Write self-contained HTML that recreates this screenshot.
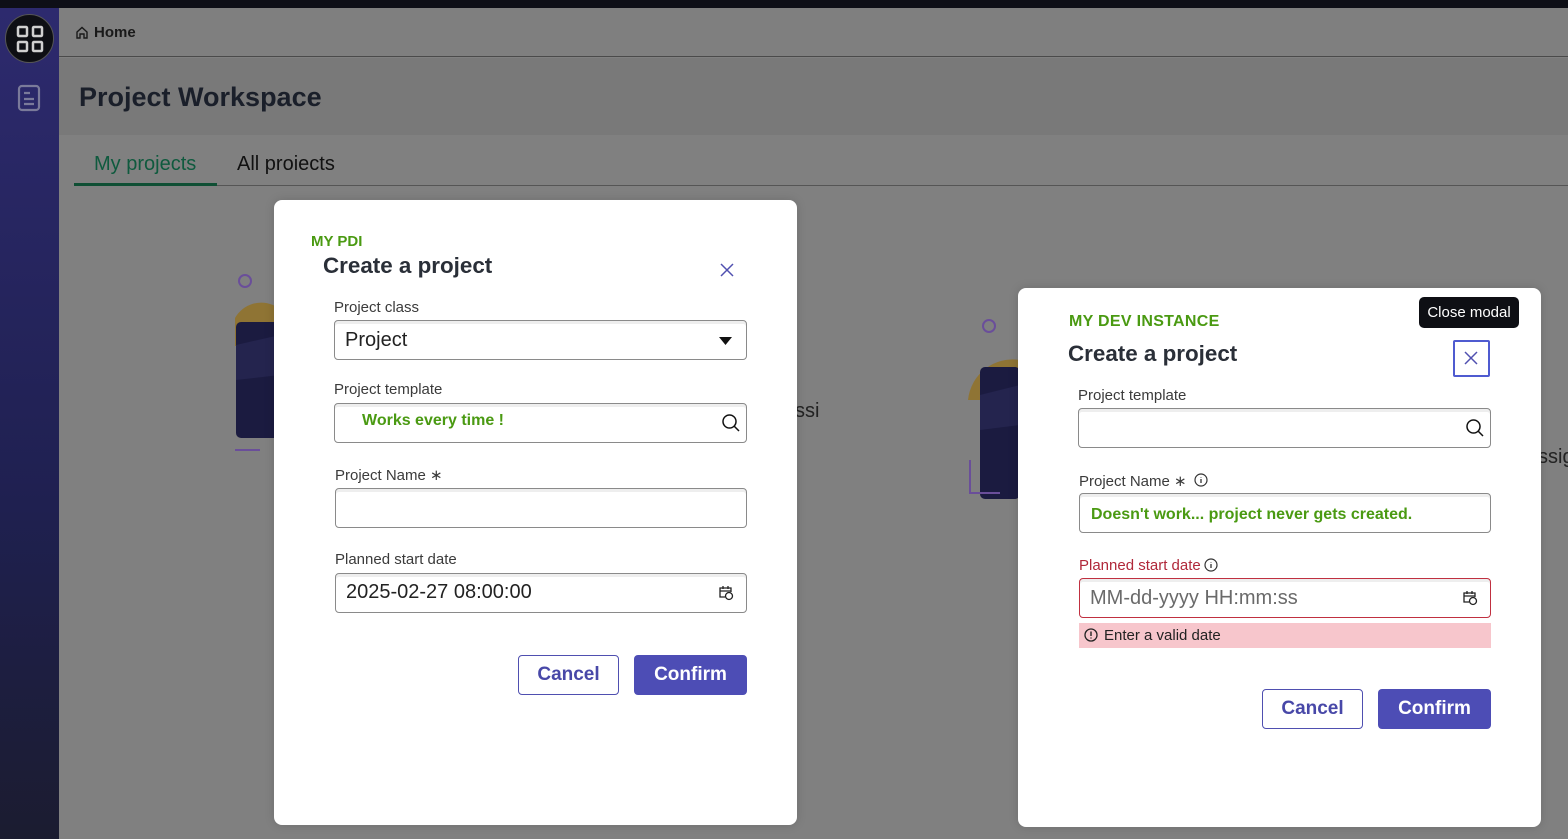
<!DOCTYPE html>
<html><head><meta charset="utf-8"><style>
*{box-sizing:border-box;margin:0;padding:0}
body{width:1568px;height:839px;overflow:hidden;background:#808080;font-family:"Liberation Sans",sans-serif;position:relative}
.abs{position:absolute}
.topbar{left:0;top:0;width:1568px;height:8px;background:#0e0f17}
.side{left:0;top:8px;width:59px;height:831px;background:linear-gradient(#2d2a6e,#1f2050 60%,#1b1c30)}
.logo{left:5px;top:14px;width:49px;height:49px;border-radius:50%;background:#0e0f14;border:1px solid #555}
.hdr{left:59px;top:8px;width:1509px;height:49px;background:#7f7f7f;border-bottom:1px solid #4a4a4a}
.band{left:59px;top:58px;width:1509px;height:77px;background:#797979}
.modal{background:#fff;border-radius:8px;box-shadow:0 0 10px rgba(0,0,0,.15)}
.lbl{font-size:15px;color:#3b3b3b}
.inp{border:1px solid #8a8a8a;border-radius:4px;background:#fff;box-shadow:inset 0 3px 0 #eee}
.btnc{border:1px solid #4f4fb0;border-radius:4px;color:#4848a8;font-size:19px;font-weight:bold;text-align:center;background:#fff}
.btnf{background:#4d4db5;border-radius:4px;color:#fff;font-size:19px;font-weight:bold;text-align:center}
.green{color:#4a9a12;font-weight:bold}
.ttl{font-size:22.4px;font-weight:bold;color:#2a2f38}
</style></head><body>
<div class="abs topbar"></div>
<div class="abs side"></div>
<div class="abs logo"><svg width="49" height="49" viewBox="0 0 49 49"><g fill="none" stroke="#d0d0d0" stroke-width="2.5"><rect x="12" y="12" width="9" height="9" rx="1"/><rect x="27" y="12" width="9" height="9" rx="1"/><rect x="12" y="27" width="9" height="9" rx="1"/><rect x="27" y="27" width="9" height="9" rx="1"/></g></svg></div>
<svg class="abs" style="left:17px;top:84px" width="24" height="28" viewBox="0 0 24 28"><rect x="2" y="2" width="20" height="24" rx="3" fill="none" stroke="#7a7a9a" stroke-width="2.2"/><path d="M7 9h6M7 15h10M7 20h10" stroke="#7a7a9a" stroke-width="2.2"/></svg>
<div class="abs hdr"></div>
<svg class="abs" style="left:75px;top:26px" width="14" height="13" viewBox="0 0 14 13"><path d="M2 6L7 1.5 12 6V12H9V8H5v4H2z" fill="none" stroke="#1a1a1a" stroke-width="1.4"/></svg>
<div class="abs" style="left:94px;top:24px;font-size:15px;font-weight:bold;color:#1a1a1a">Home</div>
<div class="abs band"></div>
<div class="abs" style="left:79px;top:82px;font-size:27px;font-weight:bold;color:#1a1f2a">Project Workspace</div>
<div class="abs" style="left:94px;top:153px;font-size:20px;color:#0f5a3e">My projects</div>
<div class="abs" style="left:237px;top:153px;font-size:20px;color:#111">All proiects</div>
<div class="abs" style="left:74px;top:183px;width:143px;height:3px;background:#0f4f34"></div>
<div class="abs" style="left:217px;top:185px;width:1351px;height:1px;background:#555"></div>
<svg class="abs" style="left:230px;top:270px" width="50" height="185" viewBox="0 0 50 185"><circle cx="15" cy="11" r="6" fill="none" stroke="#6a4e9a" stroke-width="2"/><path d="M5 48a30 30 0 0 1 40-12v40H5z" fill="#8f7434"/><rect x="6" y="52" width="44" height="116" rx="5" fill="#1b1b40"/><path d="M6 75l44-10v40L6 110z" fill="#24244e"/><path d="M5 180h25" stroke="#6a4e9a" stroke-width="2"/></svg>
<svg class="abs" style="left:945px;top:315px" width="75" height="185" viewBox="0 0 75 185"><circle cx="44" cy="11" r="6" fill="none" stroke="#6a4e9a" stroke-width="2"/><path d="M23 85a45 45 0 0 1 52-40v40z" fill="#8f7434"/><rect x="35" y="52" width="40" height="132" rx="5" fill="#1b1b40"/><path d="M35 80l40-10v40L35 115z" fill="#24244e"/><path d="M25 145v33h30" fill="none" stroke="#6a4e9a" stroke-width="2"/></svg>
<div class="abs" style="left:795px;top:400px;font-size:20px;color:#222">ssi</div>
<div class="abs" style="left:1538px;top:446px;font-size:20px;color:#222">ssig</div>
<div class="abs modal" style="left:274px;top:200px;width:523px;height:625px"></div>
<div class="abs green" style="left:311px;top:233px;font-size:15px">MY PDI</div>
<div class="abs ttl" style="left:323px;top:253px">Create a project</div>
<svg class="abs" style="left:720px;top:263px" width="14" height="14"><path d="M1 1L13 13M13 1L1 13" stroke="#5050b0" stroke-width="1.5"/></svg>
<div class="abs lbl" style="left:334px;top:299px">Project class</div>
<div class="abs inp" style="left:334px;top:320px;width:413px;height:40px"></div>
<div class="abs" style="left:345px;top:329px;font-size:20px;color:#222">Project</div>
<svg class="abs" style="left:719px;top:337px" width="13" height="8"><path d="M0 0h13L6.5 8z" fill="#111"/></svg>
<div class="abs lbl" style="left:334px;top:381px">Project template</div>
<div class="abs inp" style="left:334px;top:403px;width:413px;height:40px"></div>
<div class="abs green" style="left:362px;top:412px;font-size:16px">Works every time !</div>
<svg class="abs" style="left:721px;top:413px" width="20" height="20"><circle cx="8.5" cy="8.5" r="6.5" fill="none" stroke="#111" stroke-width="1.5"/><path d="M13 13l5 5" stroke="#111" stroke-width="1.5"/></svg>
<div class="abs lbl" style="left:335px;top:466px">Project Name ∗</div>
<div class="abs inp" style="left:335px;top:488px;width:412px;height:40px"></div>
<div class="abs lbl" style="left:335px;top:551px">Planned start date</div>
<div class="abs inp" style="left:335px;top:573px;width:412px;height:40px"></div>
<div class="abs" style="left:346px;top:581px;font-size:20px;color:#222">2025-02-27 08:00:00</div>
<svg class="abs" style="left:718px;top:585px" width="16" height="16" viewBox="0 0 16 16"><path d="M7 12H2V3h11v4M2 6h11M5 1v3M10 1v3" fill="none" stroke="#222" stroke-width="1.3"/><circle cx="11" cy="11" r="3.5" fill="none" stroke="#222" stroke-width="1.3"/></svg>
<div class="abs btnc" style="left:518px;top:655px;width:101px;height:40px;line-height:38px">Cancel</div>
<div class="abs btnf" style="left:634px;top:655px;width:113px;height:40px;line-height:40px">Confirm</div>
<div class="abs modal" style="left:1018px;top:288px;width:523px;height:539px"></div>
<div class="abs" style="left:1419px;top:297px;width:100px;height:31px;background:#0e0f14;border-radius:5px;color:#fff;font-size:15px;line-height:31px;text-align:center">Close modal</div>
<div class="abs green" style="left:1069px;top:313px;font-size:16px;letter-spacing:.3px">MY DEV INSTANCE</div>
<div class="abs ttl" style="left:1068px;top:341px">Create a project</div>
<div class="abs" style="left:1453px;top:340px;width:37px;height:37px;border:2px solid #4f5bd0;border-radius:2px"></div>
<svg class="abs" style="left:1464px;top:351px" width="14" height="14"><path d="M1 1L13 13M13 1L1 13" stroke="#5050b0" stroke-width="1.5"/></svg>
<div class="abs lbl" style="left:1078px;top:387px">Project template</div>
<div class="abs inp" style="left:1078px;top:408px;width:413px;height:40px"></div>
<svg class="abs" style="left:1465px;top:418px" width="20" height="20"><circle cx="8.5" cy="8.5" r="6.5" fill="none" stroke="#111" stroke-width="1.5"/><path d="M13 13l5 5" stroke="#111" stroke-width="1.5"/></svg>
<div class="abs lbl" style="left:1079px;top:472px">Project Name ∗</div>
<svg class="abs" style="left:1194px;top:473px" width="14" height="14"><circle cx="7" cy="7" r="6" fill="none" stroke="#333" stroke-width="1.2"/><path d="M7 6v4M7 4v.5" stroke="#333" stroke-width="1.3"/></svg>
<div class="abs inp" style="left:1079px;top:493px;width:412px;height:40px"></div>
<div class="abs green" style="left:1091px;top:506px;font-size:16px">Doesn't work... project never gets created.</div>
<div class="abs lbl" style="left:1079px;top:557px;color:#b0283a">Planned start date</div>
<svg class="abs" style="left:1204px;top:558px" width="14" height="14"><circle cx="7" cy="7" r="6" fill="none" stroke="#333" stroke-width="1.2"/><path d="M7 6v4M7 4v.5" stroke="#333" stroke-width="1.3"/></svg>
<div class="abs inp" style="left:1079px;top:578px;width:412px;height:40px;border-color:#c03040"></div>
<div class="abs" style="left:1090px;top:587px;font-size:20px;color:#6a6a6a">MM-dd-yyyy HH:mm:ss</div>
<svg class="abs" style="left:1462px;top:590px" width="16" height="16" viewBox="0 0 16 16"><path d="M7 12H2V3h11v4M2 6h11M5 1v3M10 1v3" fill="none" stroke="#222" stroke-width="1.3"/><circle cx="11" cy="11" r="3.5" fill="none" stroke="#222" stroke-width="1.3"/></svg>
<div class="abs" style="left:1079px;top:623px;width:412px;height:25px;background:#f7c6cc"></div>
<svg class="abs" style="left:1084px;top:628px" width="14" height="14"><circle cx="7" cy="7" r="6" fill="none" stroke="#222" stroke-width="1.3"/><path d="M7 3.5v4.5M7 9.5v1" stroke="#222" stroke-width="1.4"/></svg>
<div class="abs lbl" style="left:1104px;top:627px;color:#222">Enter a valid date</div>
<div class="abs btnc" style="left:1262px;top:689px;width:101px;height:40px;line-height:38px">Cancel</div>
<div class="abs btnf" style="left:1378px;top:689px;width:113px;height:40px;line-height:40px">Confirm</div>
</body></html>
